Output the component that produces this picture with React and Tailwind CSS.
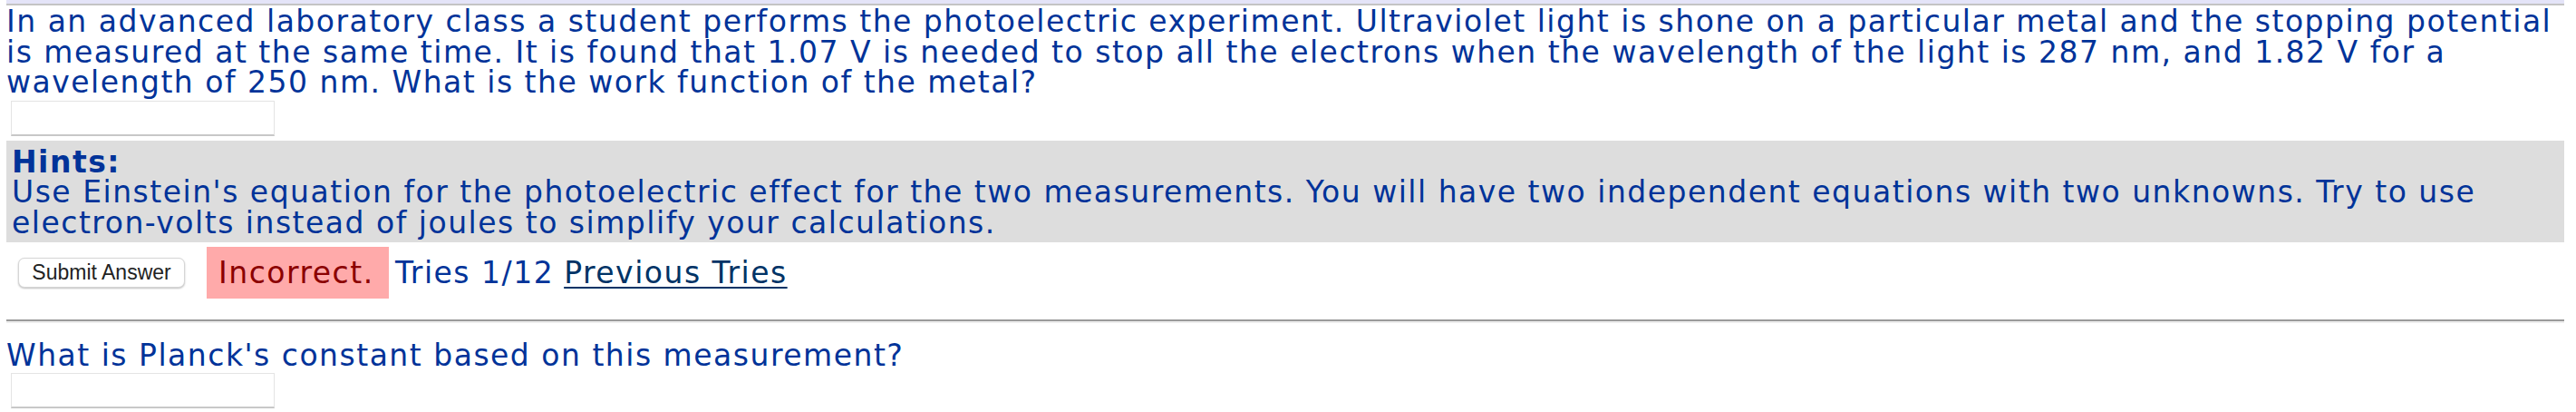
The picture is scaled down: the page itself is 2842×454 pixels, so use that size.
import React from 'react'

const AnswerBox = ({ className = '' }) => (
  <div
    className={`w-[291px] h-[39px] bg-white border border-[#e4e4e4] border-b-2 border-b-[#c8c8c8] ${className}`}
  />
)

export default function App() {
  return (
    <div className="w-[2842px] h-[454px] bg-white overflow-hidden font-['DejaVu_Sans',sans-serif] text-[#003399] tracking-[1.5px]">
      <div className="ml-[7px] mr-[13px]">
        {/* top strip */}
        <div className="h-[4px] bg-[#e4e4f8]" />
        <div className="h-[2px] bg-[#c4c4c4]" />

        <p className="text-[33px] leading-[33.5px] mt-[1px] whitespace-nowrap">
          <span className="block">
            In an advanced laboratory class a student performs the photoelectric experiment. Ultraviolet light is
            shone on a particular metal and the stopping potential
          </span>
          <span className="block">
            is measured at the same time. It is found that 1.07 V is needed to stop all the electrons when the
            wavelength of the light is 287 nm, and 1.82 V for a
          </span>
          <span className="block">wavelength of 250 nm. What is the work function of the metal?</span>
        </p>
        <AnswerBox className="ml-[5px] mt-[3px]" />

        {/* hints */}
        <div className="mt-[5px] bg-[#dddddd] pl-[6px] pt-[7px] pb-[5px] text-[33px] leading-[33.5px] whitespace-nowrap">
          <div className="font-bold">Hints:</div>
          <div>
            Use Einstein's equation for the photoelectric effect for the two measurements. You will have two
            independent equations with two unknowns. Try to use
          </div>
          <div>electron-volts instead of joules to simplify your calculations.</div>
        </div>

        {/* submit row */}
        <div className="mt-[5px] h-[57px] flex items-center">
          <button className="ml-[13px] w-[184px] h-[33px] rounded-[7px] bg-white border border-[#d6d6d6] shadow-[0_1px_2px_rgba(0,0,0,0.25)] font-['Liberation_Sans',sans-serif] text-[23px] tracking-normal text-[#222222] leading-none">
            Submit Answer
          </button>
          <span className="ml-[24px] h-[57px] w-[201px] bg-[#ffaaaa] text-[#8b0000] text-[33px] flex items-center pl-[13px]">
            Incorrect.
          </span>
          <span className="ml-[7px] text-[33px]">Tries 1/12</span>
          <a href="#" className="ml-[11px] text-[33px] text-[#003366] underline decoration-2 underline-offset-[4px]">
            Previous Tries
          </a>
        </div>

        <div className="mt-[23px] border-t-2 border-[#9a9a9a] border-b-2 border-b-[#eeeeee]" />

        <p className="mt-[19px] text-[33px] leading-[33.5px]">What is Planck's constant based on this measurement?</p>
        <AnswerBox className="ml-[5px] mt-[2px]" />
      </div>
    </div>
  )
}
